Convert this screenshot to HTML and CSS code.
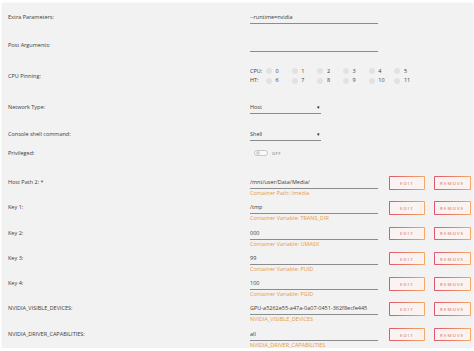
FILE: index.html
```html
<!DOCTYPE html>
<html lang="en">
<head>
  <meta charset="UTF-8" />
  <title>Container Settings</title>
  <link rel="stylesheet" href="styles.css">
</head>
<body>
  <div class="panel">
    <div class="row r-extra">
      <div class="label">Extra Parameters:</div>
      <div class="value"><div class="field wide">--runtime=nvidia</div></div>
    </div>

    <div class="row r-post">
      <div class="label">Post Arguments:</div>
      <div class="value"><div class="field wide">&nbsp;</div></div>
    </div>

    <div class="row r-cpu">
      <div class="label label-tall">CPU Pinning:</div>
      <div class="pins">
        <span class="pin-label">CPU:</span>
        <span class="pin"><i class="dot"></i>0</span>
        <span class="pin"><i class="dot"></i>1</span>
        <span class="pin"><i class="dot"></i>2</span>
        <span class="pin"><i class="dot"></i>3</span>
        <span class="pin"><i class="dot"></i>4</span>
        <span class="pin"><i class="dot"></i>5</span>
        <span class="pin-label">HT:</span>
        <span class="pin"><i class="dot"></i>6</span>
        <span class="pin"><i class="dot"></i>7</span>
        <span class="pin"><i class="dot"></i>8</span>
        <span class="pin"><i class="dot"></i>9</span>
        <span class="pin"><i class="dot"></i>10</span>
        <span class="pin"><i class="dot"></i>11</span>
      </div>
    </div>

    <div class="row r-network">
      <div class="label">Network Type:</div>
      <div class="value"><div class="field select">Host<span class="caret">&#9662;</span></div></div>
    </div>

    <div class="row r-console">
      <div class="label">Console shell command:</div>
      <div class="value"><div class="field select">Shell<span class="caret">&#9662;</span></div></div>
    </div>

    <div class="row r-priv">
      <div class="label">Privileged:</div>
      <div class="value toggle-wrap">
        <span class="toggle"><i class="knob"></i></span>
        <span class="toggle-text">OFF</span>
      </div>
    </div>

    <div class="row key-row">
      <div class="label">Host Path 2: *</div>
      <div class="value key-value">
        <div>
          <div class="field wide">/mnt/user/Data/Media/</div>
          <div class="hint">Container Path: /media</div>
        </div>
        <div class="btn edit">EDIT</div>
        <div class="btn remove">REMOVE</div>
      </div>
    </div>

    <div class="row key-row">
      <div class="label">Key 1:</div>
      <div class="value key-value">
        <div>
          <div class="field wide">/tmp</div>
          <div class="hint">Container Variable: TRANS_DIR</div>
        </div>
        <div class="btn edit">EDIT</div>
        <div class="btn remove">REMOVE</div>
      </div>
    </div>

    <div class="row key-row">
      <div class="label">Key 2:</div>
      <div class="value key-value">
        <div>
          <div class="field wide">000</div>
          <div class="hint">Container Variable: UMASK</div>
        </div>
        <div class="btn edit">EDIT</div>
        <div class="btn remove">REMOVE</div>
      </div>
    </div>

    <div class="row key-row">
      <div class="label">Key 3:</div>
      <div class="value key-value">
        <div>
          <div class="field wide">99</div>
          <div class="hint">Container Variable: PUID</div>
        </div>
        <div class="btn edit">EDIT</div>
        <div class="btn remove">REMOVE</div>
      </div>
    </div>

    <div class="row key-row">
      <div class="label">Key 4:</div>
      <div class="value key-value">
        <div>
          <div class="field wide">100</div>
          <div class="hint">Container Variable: PGID</div>
        </div>
        <div class="btn edit">EDIT</div>
        <div class="btn remove">REMOVE</div>
      </div>
    </div>

    <div class="row key-row">
      <div class="label">NVIDIA_VISIBLE_DEVICES:</div>
      <div class="value key-value">
        <div>
          <div class="field wide">GPU-a5262e55-a47a-0a07-0451-362f8ecfe445</div>
          <div class="hint">NVIDIA_VISIBLE_DEVICES</div>
        </div>
        <div class="btn edit">EDIT</div>
        <div class="btn remove">REMOVE</div>
      </div>
    </div>

    <div class="row key-row">
      <div class="label">NVIDIA_DRIVER_CAPABILITIES:</div>
      <div class="value key-value">
        <div>
          <div class="field wide">all</div>
          <div class="hint">NVIDIA_DRIVER_CAPABILITIES</div>
        </div>
        <div class="btn edit">EDIT</div>
        <div class="btn remove">REMOVE</div>
      </div>
    </div>
  </div>
</body>
</html>
```

FILE: styles.css
```css
:root {
  --panel-bg: #f2f2f2;
  --text-color: #3c3c3c;
  --line-color: #8c8c8c;
  --hint-color: #eb9a3e;
  --btn-left: #e0566e;
  --btn-right: #f6a964;
}

body {
  margin: 0;
  background: #ffffff;
  font-family: 'Open Sans', 'Liberation Sans', sans-serif;
  font-size: 5.5px;
  color: var(--text-color);
}

.panel {
  margin: 3px 1px 0 2px;
  height: 345px;
  padding: 9.5px 0 0 6px;
  box-sizing: border-box;
  background: var(--panel-bg);
  box-shadow: 0 0 2px rgb(0 0 0 / 0.08);
  overflow: hidden;
}

.row {
  display: grid;
  grid-template-columns: 242px 1fr;
  align-items: start;
}

.r-extra { height: 28.5px; }
.r-post { height: 25.5px; }
.r-cpu { height: 36px; }
.r-network { height: 27.5px; }
.r-console { height: 19px; }
.r-priv { height: 29px; }
.key-row { height: 25.3px; }

.label {
  line-height: 8px;
  white-space: nowrap;
}

.label-tall {
  line-height: 19px;
}

.field {
  line-height: 8px;
  padding-bottom: 2px;
  border-bottom: 1px solid var(--line-color);
  white-space: nowrap;
}

.field.wide {
  width: 128px;
}

.field.select {
  width: 71px;
  display: flex;
  justify-content: space-between;
}

.caret {
  font-size: 5px;
  color: #222;
  margin-right: 1px;
}

/* cpu pinning grid */
.pins {
  display: grid;
  grid-template-columns: 16px repeat(6, 25.7px);
  line-height: 9.5px;
}

.pin {
  display: flex;
  align-items: center;
}

.dot {
  width: 6px;
  height: 6px;
  border-radius: 50%;
  background: #e2e2e2;
  margin-right: 3.5px;
}

/* privileged switch */
.toggle-wrap {
  display: flex;
  align-items: center;
  height: 8px;
  padding-left: 4px;
}

.toggle {
  width: 10px;
  height: 4px;
  border: 1px solid #c8c8c8;
  border-radius: 3px;
  background: #fafafa;
  display: flex;
  align-items: center;
  padding: 0 1px;
}

.knob {
  width: 4px;
  height: 4px;
  border-radius: 50%;
  background: #d4d4d4;
}

.toggle-text {
  font-size: 4px;
  letter-spacing: 0.6px;
  color: #666;
  margin-left: 4px;
}

/* key rows */
.key-value {
  display: flex;
  align-items: flex-start;
}

.hint {
  line-height: 8px;
  color: var(--hint-color);
  white-space: nowrap;
}

.btn {
  height: 13.5px;
  margin-top: -2px;
  box-sizing: border-box;
  border: 1.5px solid transparent;
  border-radius: 1px;
  background: linear-gradient(#faf3f1, #faf3f1) padding-box,
              linear-gradient(90deg, var(--btn-left), var(--btn-right)) border-box;
  display: flex;
  align-items: center;
  justify-content: center;
  font-size: 4.3px;
  font-weight: 600;
  letter-spacing: 1.1px;
  color: #d9917f;
}

.btn.edit {
  width: 36.5px;
  margin-left: 10.7px;
}

.btn.remove {
  width: 37px;
  margin-left: 8.5px;
}
```
